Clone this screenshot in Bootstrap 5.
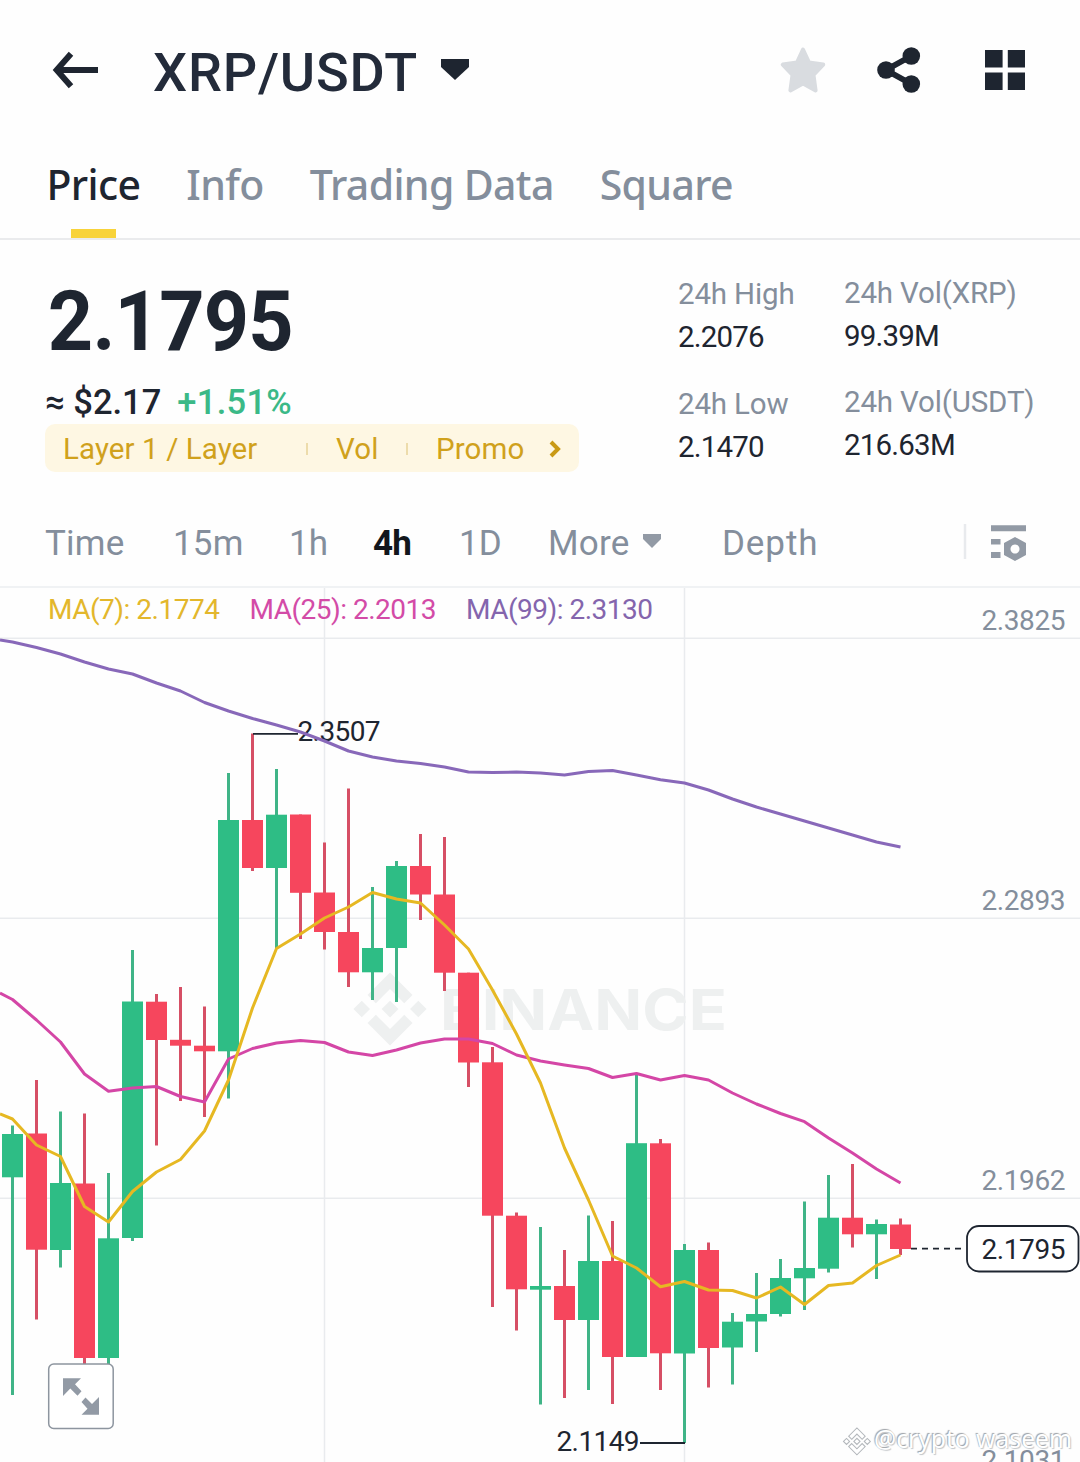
<!DOCTYPE html>
<html lang="en">
<head>
<meta charset="utf-8">
<meta name="viewport" content="width=device-width, initial-scale=1">
<title>XRP/USDT</title>
<link href="https://cdn.jsdelivr.net/npm/bootstrap@5.3.0/dist/css/bootstrap.min.css" rel="stylesheet">
<style>
:root{--ink:#1e2530;--muted:#848e9c;--gold:#d0a11c;--up:#2ebd85;--down:#f6465d}
body{font-family:Roboto,"Liberation Sans",sans-serif;color:var(--ink);background:#fefefe;width:1080px;height:1462px;overflow:hidden}
svg{display:block;flex:none}
.topbar{height:142px;padding:0 55px 2px 52px}
.pair{font-size:54px;font-weight:500;line-height:60px;width:265px;margin-left:54px;margin-top:5px;letter-spacing:.8px;white-space:nowrap;color:#232b3a}
.caret-lg{margin-left:23px}
.actions{gap:51px}
.actions .apps{margin-left:13px}
.tabs{height:98px;border-bottom:2px solid #eaebed;padding-left:46.5px;gap:46px}
.tabs .nav-link{position:relative;height:96px;padding:0;font:500 41px/84px "Noto Sans",sans-serif;letter-spacing:-.65px;color:var(--muted);white-space:nowrap}
.tabs .nav-link.active{color:var(--ink)}
.tabs .nav-link.active::after{content:"";position:absolute;left:24.5px;bottom:0;width:45px;height:9px;background:#f8d33a}
.summary{height:260px;padding-left:45px}
.quote{padding-top:23px}
.lastprice{font-size:83px;font-weight:700;line-height:117px;padding-left:3px;letter-spacing:-.8px;transform:scaleX(.952);transform-origin:0 0}
.subprice{font-size:34.5px;font-weight:500;line-height:44px;gap:16px;white-space:pre}
.rise{color:#3bb987;letter-spacing:.3px}
.tagbar{width:534px;height:48px;border-radius:10px;background:#fef7e3;color:var(--gold);font-size:29.5px;padding:2px 17px 0 18px;letter-spacing:.1px}
.tagbar .first{width:243px}
.tagbar .next{width:98px;padding-left:28px}
.tagbar .final{padding-left:28px}
.tick{width:2px;height:12px;background:#eddcab}
.stat{font-size:29.5px;white-space:nowrap;letter-spacing:-.8px}
.stat .lbl{color:var(--muted);letter-spacing:-.15px}
.s1{width:166px;padding-top:33px;line-height:43px}
.s1 .pairbox+.pairbox{margin-top:24px}
.s2{width:236px;padding-top:32px;line-height:42.5px}
.s2 .pairbox+.pairbox{margin-top:24px}
.intervals{height:88px;border-bottom:2px solid #f0f2f4;padding:3px 0 0 45px;font-size:35px;color:var(--muted);white-space:nowrap}
.intervals span{letter-spacing:.2px}
.intervals .on{color:#12161c;font-weight:700;letter-spacing:-.8px}
.caret-sm{margin-top:-8px}
.intervals .depth{width:302px;padding-left:61px;letter-spacing:.9px}
.tools{margin-top:-5px}
.credit{fill:#fff;text-shadow:-1px -1px 1px #9da1a6,1px 1px 1px #c3c6c9}
</style>
</head>
<body>
<header class="topbar d-flex align-items-center">
  <svg width="47" height="40" viewBox="52 50 47 40" fill="none" stroke="#1e2530" stroke-width="6"><path d="M98 70H57M71 53.800 56.700 70 71 86.200"/></svg>
  <div class="pair">XRP/USDT</div>
  <svg class="caret-lg" width="28" height="22" viewBox="0 0 28 22"><path fill="#1e2530" d="M0 0h28v8L14 21 0 8z"/></svg>
  <div class="actions d-flex align-items-center ms-auto">
    <svg width="46" height="48" viewBox="780 47 46 48"><path fill="#d9dce0" stroke="#d9dce0" stroke-width="4" stroke-linejoin="round" d="M803 50.500l6 13.100 14.200 2-9.700 10.400 2.100 15.400L803 84.500l-12.600 6.900 2.100-15.400L782.800 65.600l14.200-2z"/></svg>
    <svg width="44" height="48" viewBox="877 46 44 48"><path d="M911.300 56 886 70l25.300 14" fill="none" stroke="#1e2530" stroke-width="6"/><g fill="#1e2530"><circle cx="911.300" cy="56" r="8.800"/><circle cx="886" cy="70" r="8.800"/><circle cx="911.300" cy="84" r="8.800"/></g></svg>
    <svg class="apps" width="40" height="40" viewBox="0 0 40 40"><path fill="#1e2530" d="M0 0h17.600v17.500H0zM22.800 0H40v17.500H22.800zM0 22.500h17.600V40H0zM22.800 22.500H40V40H22.800z"/></svg>
  </div>
</header>

<nav class="nav tabs flex-nowrap">
  <a class="nav-link active">Price</a>
  <a class="nav-link">Info</a>
  <a class="nav-link">Trading Data</a>
  <a class="nav-link">Square</a>
</nav>

<section class="summary d-flex">
  <div class="quote flex-grow-1">
    <div class="lastprice">2.1795</div>
    <div class="subprice d-flex"><span>≈ $2.17</span><span class="rise">+1.51%</span></div>
    <div class="tagbar d-flex align-items-center">
      <span class="first">Layer 1 / Layer</span><i class="tick"></i>
      <span class="next">Vol</span><i class="tick"></i>
      <span class="final">Promo</span>
      <svg class="ms-auto" width="13" height="20" viewBox="0 0 13 20"><path d="M2 3l7 7-7 7" fill="none" stroke="#c99a16" stroke-width="4"/></svg>
    </div>
  </div>
  <div class="stat s1">
    <div class="pairbox"><div class="lbl">24h High</div><div>2.2076</div></div>
    <div class="pairbox"><div class="lbl">24h Low</div><div>2.1470</div></div>
  </div>
  <div class="stat s2">
    <div class="pairbox"><div class="lbl">24h Vol(XRP)</div><div>99.39M</div></div>
    <div class="pairbox"><div class="lbl">24h Vol(USDT)</div><div>216.63M</div></div>
  </div>
</section>

<div class="intervals d-flex align-items-center">
  <span style="width:128px">Time</span>
  <span style="width:116px">15m</span>
  <span style="width:84px">1h</span>
  <span class="on" style="width:86px">4h</span>
  <span style="width:89px">1D</span>
  <span style="width:95px">More</span>
  <svg class="caret-sm" width="18" height="14" viewBox="0 0 18 14"><path fill="#929aa5" d="M0 0h18v5L9 14 0 5z"/></svg>
  <span class="depth">Depth</span>
  <svg class="tools" width="64" height="40" viewBox="963 521 64 40"><path d="M965 523v35" stroke="#e8eaed" stroke-width="2.500"/><path fill="#929aa5" fill-rule="evenodd" d="M991 524.300h35v6h-35zM991 538h9.500v5.500H991zM991 551h9.500v6H991zM1015 536l11 6v12l-11 6-11-6v-12zm0 7.500a4.500 4.500 0 1 0 .01 0z"/></svg>
</div>

<svg id="chart" width="1080" height="874" viewBox="0 588 1080 874" font-family="Roboto, sans-serif" font-size="28">
  <g stroke="#e9ebee" stroke-width="1.500"><path d="M0 638.300h1080M0 918.300h1080M0 1198.300h1080M324.500 588v874M684.500 588v874"/></g>
  <g fill="#eef0f0">
    <path transform="translate(353.500 972.500) scale(.577)" d="M38.730 53.200l24.590-24.580 24.600 24.600 14.300-14.310L63.320 0l-38.900 38.900zM0 63.310l14.300-14.310 14.310 14.310-14.310 14.300zM38.730 73.410l24.590 24.590 24.600-24.600 14.310 14.290-38.900 38.910-38.910-38.880zM98 63.310l14.300-14.310 14.310 14.300-14.310 14.320zM77.830 63.300L63.320 48.780 48.810 63.280l14.510 14.500z"/>
    <text x="440" y="1029.500" font-family="Inter, sans-serif" font-weight="700" font-size="57" textLength="287" lengthAdjust="spacingAndGlyphs">BINANCE</text>
  </g>
  <g id="candles"></g>
  <g fill="#1e2530">
    <path d="M253 733.800h45M640 1443h45" stroke="#1e2530" stroke-width="1.800"/>
    <text x="297.500" y="741" textLength="83">2.3507</text>
    <text x="556.500" y="1451" textLength="83">2.1149</text>
  </g>
  <g id="averages" fill="none" stroke-width="3" stroke-linejoin="round"></g>
  <text x="48" y="619" fill="#e3b72c" textLength="172">MA(7): 2.1774</text>
  <text x="249.500" y="619" fill="#d34ba7" textLength="187">MA(25): 2.2013</text>
  <text x="466" y="619" fill="#8465ad" textLength="187">MA(99): 2.3130</text>
  <g fill="#848e9c">
    <text x="981.500" y="630" textLength="84">2.3825</text>
    <text x="981.500" y="910" textLength="84">2.2893</text>
    <text x="981.500" y="1190" textLength="84">2.1962</text>
    <text x="981.500" y="1470" textLength="84">2.1031</text>
  </g>
  <path d="M911 1248.600h55" stroke="#1e2530" stroke-width="1.800" stroke-dasharray="6 5"/>
  <rect x="967" y="1226" width="111.500" height="45.500" rx="12" fill="#fff" stroke="#1e2530" stroke-width="1.800"/>
  <text x="981.500" y="1259" fill="#1e2530" textLength="84">2.1795</text>
  <g>
    <rect x="48.700" y="1364" width="64.500" height="64.500" rx="5" fill="#fff" stroke="#8d959f" stroke-width="1.500"/>
    <path fill="#929aa5" d="M63 1378.300h18l-6 6 6.500 7-4 4.500-7.200-7.200-7.300 7.400zM99 1414.700H81.500l6-6-6-6.700 4-4.500 6.500 6.500 7-7z"/>
  </g>
  <g>
    <path transform="translate(843.500 1428) scale(.212)" fill="#fff" stroke="#b4b8bc" stroke-width="5" d="M38.730 53.200l24.590-24.580 24.600 24.600 14.300-14.310L63.320 0l-38.900 38.900zM0 63.310l14.300-14.310 14.310 14.310-14.310 14.300zM38.730 73.410l24.590 24.590 24.600-24.600 14.310 14.290-38.900 38.910-38.910-38.880zM98 63.310l14.300-14.310 14.310 14.300-14.310 14.320zM77.830 63.300L63.320 48.780 48.810 63.280l14.510 14.500z"/>
    <text class="credit" x="874" y="1448" font-family="Noto Sans, sans-serif" font-size="25" textLength="198" lengthAdjust="spacingAndGlyphs">@crypto waseem</text>
  </g>
</svg>
<script src="https://cdn.jsdelivr.net/npm/bootstrap@5.3.0/dist/js/bootstrap.bundle.min.js"></script>
<script>
// direction, high, body top, body bottom, low (chart y units), one candle every 24 units
const candles = [
['u',1125.5,1134,1177.3,1395],['d',1080,1133.5,1249.7,1319.5],['u',1111.5,1183,1250,1267.5],['d',1113.5,1183.5,1358,1366],
['u',1173,1238.3,1358,1366],['u',950,1001.5,1238,1241],['d',994,1001.7,1040,1145.5],['d',987,1039.8,1045.7,1101],
['d',1006.5,1045.7,1051.3,1117],['u',773,820,1051.3,1098.5],['d',733.5,820,868,871],['u',769,814.7,868,948],
['d',814.5,814.5,892.8,939],['d',842.5,892.5,932,949.5],['d',788.5,932,972.3,987],['u',887,948,972.3,1000],
['u',861,866,948,1002],['d',834,866,894.5,920],['d',837,894.5,972.7,991],['d',972.7,972.7,1062.5,1087],
['d',1047,1062.3,1215.7,1307],['d',1212.5,1215.7,1289.3,1330.5],['u',1227,1286,1289.7,1404.5],['d',1250,1286,1320,1398],
['u',1215.5,1261,1320,1390],['d',1221,1261,1357,1404],['u',1073,1143.2,1357,1357],['d',1139,1143.3,1353.3,1390],
['u',1244,1250,1353.5,1443],['d',1242.5,1250,1348,1387.5],['u',1313,1321.7,1347.5,1384.5],['u',1273,1314,1321.5,1352],
['u',1259,1278,1314,1316.5],['u',1201.5,1268,1278.3,1310],['u',1175,1217.7,1268.7,1272.5],['d',1164,1217.7,1234.3,1247.5],
['u',1219.5,1224,1234.3,1279],['d',1218.5,1224.5,1249,1255]];
const averages = [
['#8868b9',640,[642,647.5,654,662,669,674,683,691,702.5,711,718.5,725,732,741,751,757,761,763.5,767,772,772.5,772,773,775,771.5,770.5,775,779.7,783,790,799,807,814,821,828,835,842,847]],
['#d446a6',993,[999.5,1020,1042,1074,1091.3,1088,1086.5,1096.5,1102,1059,1048.5,1043,1040.5,1042.5,1052,1055.5,1050,1043,1039,1039,1043.5,1055,1061,1065,1068.5,1077.5,1073.5,1080,1075.5,1080,1093,1104,1113.5,1121.7,1138,1153,1169,1183]],
['#e6b822',1114,[1119,1145,1156.5,1206.5,1222,1191.5,1172,1159.5,1131,1080,1008,948.5,934,918,907,892.5,899,903,925,949,990,1034,1083,1148,1200,1256,1268,1286.7,1281.5,1290,1290.5,1298,1287,1304.5,1285.5,1283,1265.5,1255]]];
document.getElementById('candles').innerHTML = candles.map(([d,h,t,b,l],i) => {
  const x = 24*i, up = d === 'u';
  return `<rect x="${x+11}" y="${h}" width="3" height="${l-h}" fill="${up?'#40b487':'#d64f65'}"/><rect x="${x+2}" y="${t}" width="21" height="${b-t}" fill="${up?'#2ebd85':'#f6465d'}"/>`;
}).join('');
document.getElementById('averages').innerHTML = averages.map(([c,y0,ys]) =>
  `<polyline stroke="${c}" points="0,${y0} ${ys.map((y,i)=>`${24*i+12.5},${y}`).join(' ')}"/>`).join('');
</script>
</body>
</html>
